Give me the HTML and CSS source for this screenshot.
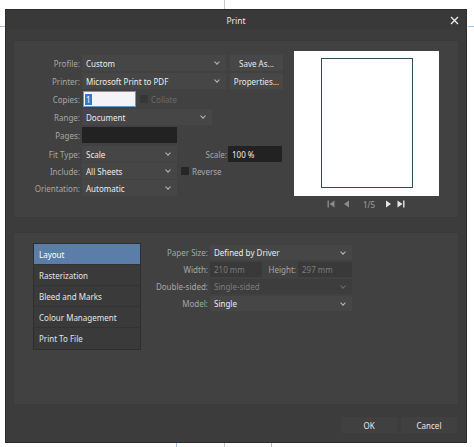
FILE: index.html
```html
<!DOCTYPE html>
<html>
<head>
<meta charset="utf-8">
<link rel="stylesheet" href="styles.css">
</head>
<body>
<div class="guide gh gh-l"></div>
<div class="guide gh gh-r"></div>
<div class="guide gv gv-top"></div>
<div class="guide gv gv-b1"></div>
<div class="guide gv gv-b2"></div>
<div class="guide gv gv-b3"></div>

<div class="window">
  <div class="titlebar">
    <span class="title">Print</span>
    <svg class="close" width="9" height="9" viewBox="0 0 9 9"><path d="M1 1L8 8M8 1L1 8" stroke="#e8e8e8" stroke-width="1.4"/></svg>
  </div>

  <div class="panel top-panel">
    <div class="form">
      <div class="row">
        <span class="label">Profile:</span>
        <div class="select w144"><span>Custom</span><i class="chev"></i></div>
        <div class="btn w53">Save As...</div>
      </div>
      <div class="row">
        <span class="label">Printer:</span>
        <div class="select w144"><span>Microsoft Print to PDF</span><i class="chev"></i></div>
        <div class="btn w53">Properties...</div>
      </div>
      <div class="row">
        <span class="label">Copies:</span>
        <div class="input focus w53"><span class="sel">1</span></div>
        <span class="check dim"></span><span class="cklabel dimtext">Collate</span>
      </div>
      <div class="row">
        <span class="label">Range:</span>
        <div class="select w130"><span>Document</span><i class="chev"></i></div>
      </div>
      <div class="row">
        <span class="label">Pages:</span>
        <div class="input dark w95"></div>
      </div>
      <div class="row tight gapabove">
        <span class="label">Fit Type:</span>
        <div class="select w95"><span>Scale</span><i class="chev"></i></div>
        <span class="label scale-label">Scale:</span>
        <div class="input dark w54"><span>100 %</span></div>
      </div>
      <div class="row tight">
        <span class="label">Include:</span>
        <div class="select w95"><span>All Sheets</span><i class="chev"></i></div>
        <span class="check"></span><span class="cklabel">Reverse</span>
      </div>
      <div class="row tight">
        <span class="label">Orientation:</span>
        <div class="select w95"><span>Automatic</span><i class="chev"></i></div>
      </div>
    </div>

    <div class="preview-col">
      <div class="preview"><div class="page"></div></div>
      <div class="nav">
        <svg width="8" height="8" viewBox="0 0 8 8"><rect x="0.5" y="0.5" width="1.4" height="7" fill="#8a8a8a"/><path d="M7.5 0.5L2.5 4L7.5 7.5Z" fill="#8a8a8a"/></svg>
        <svg class="nprev" width="7" height="8" viewBox="0 0 7 8"><path d="M6 0.5L1 4L6 7.5Z" fill="#8a8a8a"/></svg>
        <span class="pageno">1/5</span>
        <svg class="nnext" width="7" height="8" viewBox="0 0 7 8"><path d="M1 0.5L6 4L1 7.5Z" fill="#e6e6e6"/></svg>
        <svg width="8" height="8" viewBox="0 0 8 8"><path d="M0.5 0.5L5.5 4L0.5 7.5Z" fill="#e6e6e6"/><rect x="6.1" y="0.5" width="1.4" height="7" fill="#e6e6e6"/></svg>
      </div>
    </div>
  </div>

  <div class="panel bottom-panel">
    <div class="list">
      <div class="item selected">Layout</div>
      <div class="item">Rasterization</div>
      <div class="item">Bleed and Marks</div>
      <div class="item">Colour Management</div>
      <div class="item">Print To File</div>
    </div>
    <div class="form2">
      <div class="row2">
        <span class="label2">Paper Size:</span>
        <div class="select s2 w142"><span>Defined by Driver</span><i class="chev"></i></div>
      </div>
      <div class="row2">
        <span class="label2">Width:</span>
        <div class="input dis w52"><span>210 mm</span></div>
        <span class="label2 hlabel">Height:</span>
        <div class="input dis w54"><span>297 mm</span></div>
      </div>
      <div class="row2">
        <span class="label2">Double-sided:</span>
        <div class="select s2 dis w142"><span>Single-sided</span><i class="chev"></i></div>
      </div>
      <div class="row2">
        <span class="label2">Model:</span>
        <div class="select s2 w142"><span>Single</span><i class="chev"></i></div>
      </div>
    </div>
  </div>

  <div class="footer">
    <div class="fbtn">OK</div>
    <div class="fbtn">Cancel</div>
  </div>
</div>
</body>
</html>
```

FILE: styles.css
```css
html, body {
  margin: 0;
  padding: 0;
}
body {
  width: 474px;
  height: 447px;
  background: #ffffff;
  position: relative;
  overflow: hidden;
  font-family: "Noto Sans", "Open Sans", sans-serif;
  font-size: 8px;
  color: #e4e4e4;
}
.guide { position: absolute; background: #a9c4e0; }
.gh { height: 1px; top: 26px; width: 6px; }
.gh-l { left: 0; }
.gh-r { left: 468px; }
.gv { width: 1px; }
.gv-top { left: 224px; top: 0; height: 9px; background: #c9c9c9; }
.gv-b1 { left: 176px; top: 442px; height: 5px; }
.gv-b2 { left: 224px; top: 442px; height: 5px; background: #c9c9c9; }
.gv-b3 { left: 271px; top: 442px; height: 5px; }

.window {
  position: absolute;
  left: 5px;
  top: 9px;
  width: 460px;
  height: 432px;
  background: #3c3c3c;
  border: 1px solid #2c2c2c;
  display: flex;
  flex-direction: column;
}
.titlebar {
  height: 20px;
  display: flex;
  align-items: center;
  justify-content: center;
  position: relative;
  background: #393939;
}
.title { font-size: 8.5px; color: #e6e6e6; }
.close { position: absolute; right: 7px; top: 6px; }

.panel {
  margin: 0 7px;
  background: #414141;
  border: 1px solid #3a3a3a;
}
.top-panel {
  margin-top: 10px;
  height: 176px;
  display: flex;
}
.form {
  width: 270px;
  padding-top: 14px;
  display: flex;
  flex-direction: column;
}
.row {
  display: flex;
  align-items: center;
  height: 16px;
  margin-bottom: 2px;
}
.row.tight { margin-bottom: 1px; }
.row.gapabove { margin-top: 1px; }
.label {
  width: 66px;
  text-align: right;
  color: #a6a6a6;
  margin-right: 2px;
  flex: none;
  white-space: nowrap;
}
.select, .input, .btn {
  height: 16px;
  box-sizing: border-box;
  display: flex;
  align-items: center;
  padding: 0 4px;
  flex: none;
  white-space: nowrap;
}
.select {
  background: #464646;
  justify-content: space-between;
}
.select span, .input span { color: #ececec; }
.chev {
  width: 3px;
  height: 3px;
  border-right: 1px solid #b8b8b8;
  border-bottom: 1px solid #b8b8b8;
  transform: rotate(45deg);
  margin-right: 3px;
  margin-top: -2px;
}
.btn {
  background: #474747;
  margin-left: 4px;
  justify-content: center;
  color: #e8e8e8;
}
.input.dark { background: #222222; }
.input.focus {
  background: #f2f4f8;
  border: 1px solid #6d95c8;
  padding: 0 1px;
  margin-left: 1px;
}
.input.focus .sel {
  background: #3b76c9;
  color: #ffffff;
  padding: 0 1px;
  line-height: 11px;
}
.check {
  width: 8px;
  height: 8px;
  background: #262626;
  margin-left: 4px;
  margin-right: 3px;
  flex: none;
}
.check.dim { background: #363636; }
.cklabel { color: #a8a8a8; }
.dimtext { color: #6a6a6a; }
.scale-label { width: 50px; margin-right: 1px; }
.w144 { width: 144px; }
.w130 { width: 130px; }
.w95 { width: 95px; }
.w53 { width: 53px; }
.w54 { width: 54px; }
.w52 { width: 52px; }
.w142 { width: 142px; }

.preview-col {
  margin-left: 10px;
  padding-top: 10px;
  display: flex;
  flex-direction: column;
  align-items: flex-start;
}
.preview {
  width: 145px;
  height: 145px;
  background: #ffffff;
  box-sizing: border-box;
  padding: 7px 0 0 27px;
}
.page {
  width: 92px;
  height: 130px;
  box-sizing: border-box;
  border: 1px solid #2e4d4d;
}
.nav {
  display: flex;
  align-items: center;
  margin-top: 3px;
  padding-left: 33px;
  height: 9px;
}
.nprev { margin-left: 8px; }
.pageno { margin: 2px 10px 0 13px; color: #a0a0a0; font-size: 8px; }
.nnext { margin-right: 5px; }

.bottom-panel {
  margin-top: 14px;
  height: 173px;
  display: flex;
  align-items: flex-start;
  box-sizing: border-box;
  padding: 10px 0 0 19px;
}
.list {
  width: 108px;
  box-sizing: border-box;
  background: #373737;
  border: 1px solid #2e2e2e;
  display: flex;
  flex-direction: column;
}
.item {
  height: 21px;
  box-sizing: border-box;
  display: flex;
  align-items: center;
  padding-left: 5px;
  border-bottom: 1px solid #333333;
  color: #e4e4e4;
  background: #3a3a3a;
}
.item:last-child { border-bottom: none; }
.item.selected { background: #5a7ea7; color: #ffffff; }
.form2 {
  margin-left: 8px;
  padding-top: 2px;
  display: flex;
  flex-direction: column;
}
.row2 {
  display: flex;
  align-items: center;
  height: 15px;
  margin-bottom: 2px;
}
.label2 {
  width: 59px;
  text-align: right;
  color: #a6a6a6;
  margin-right: 2px;
  white-space: nowrap;
  flex: none;
}
.select.s2, .row2 .input { height: 15px; }
.input.dis { background: #393939; }
.input.dis span, .select.dis span { color: #7c7c7c; }
.select.dis { background: #3d3d3d; }
.select.dis .chev { border-color: #6c6c6c; }
.hlabel { width: 34px; margin-right: 2px; }

.footer {
  flex: 1;
  display: flex;
  justify-content: flex-end;
  align-items: center;
  padding-right: 9px;
  gap: 4px;
}
.fbtn {
  width: 56px;
  height: 16px;
  background: #404040;
  display: flex;
  align-items: center;
  justify-content: center;
  color: #e8e8e8;
  margin-top: 3px;
}
```
